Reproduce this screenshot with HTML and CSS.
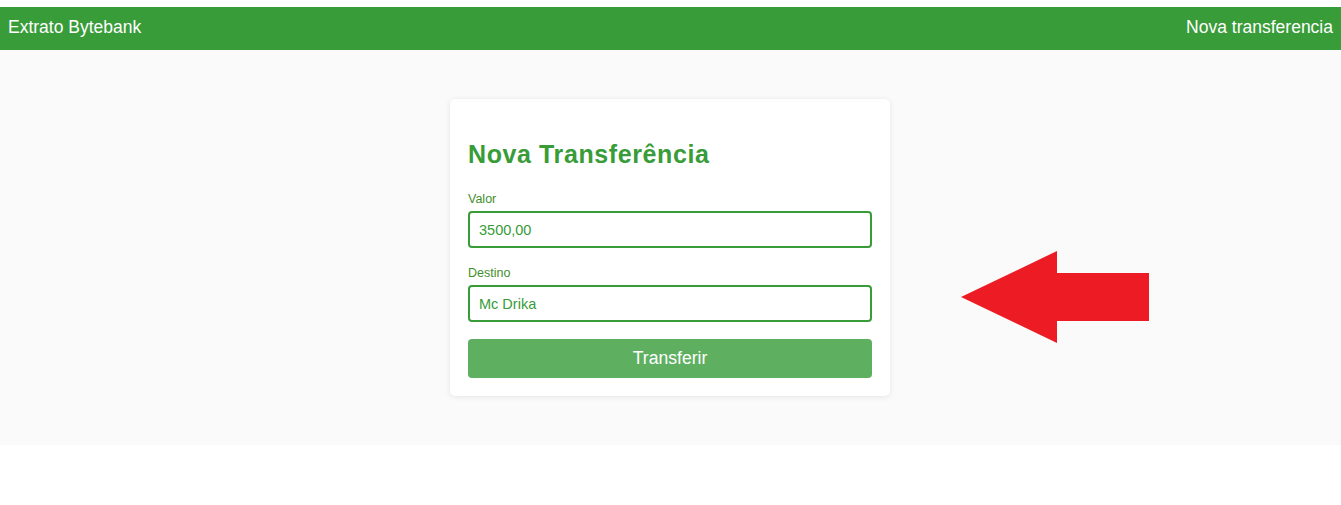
FILE: index.html
```html
<!DOCTYPE html>
<html lang="pt-BR">
<head>
<meta charset="utf-8">
<title>Bytebank</title>
<link rel="stylesheet" href="styles.css">
</head>
<body>
<header class="topbar">
  <a class="topbar-link" href="#">Extrato Bytebank</a>
  <a class="topbar-link" href="#">Nova transferencia</a>
</header>
<main class="stage">
  <section class="card">
    <h2 class="card-title">Nova Transferência</h2>
    <form class="form">
      <div class="field">
        <label class="field-label">Valor</label>
        <input class="field-input" type="text" value="3500,00">
      </div>
      <div class="field">
        <label class="field-label">Destino</label>
        <input class="field-input" type="text" value="Mc Drika">
      </div>
      <button class="btn" type="button">Transferir</button>
    </form>
  </section>
  <svg class="arrow" width="190" height="94" viewBox="960 250 190 94" aria-hidden="true">
    <polygon points="961,297 1057,251 1057,273 1149,273 1149,321 1057,321 1057,343" fill="#ed1c24"/>
  </svg>
</main>
</body>
</html>
```
FILE: styles.css
```css
* { box-sizing: border-box; }
html, body { margin: 0; padding: 0; background: #ffffff; }
body {
  padding-top: 7px;
  font-family: "Liberation Sans", Arial, sans-serif;
  height: 505px;
  overflow: hidden;
}
.topbar {
  display: flex;
  justify-content: space-between;
  align-items: center;
  background: #389c38;
  height: 43px;
  padding: 0 8px 2px 8px;
}
.topbar-link {
  color: #ffffff;
  text-decoration: none;
  font-size: 17.5px;
  line-height: 21px;
}
.stage {
  position: relative;
  background: #fafafa;
  padding: 49px 1px 49px 0;
  display: flex;
  justify-content: center;
}
.card {
  width: 440px;
  background: #ffffff;
  border-radius: 5px;
  box-shadow: 0 1px 6px rgba(0, 0, 0, 0.08), 0 0 2px rgba(0, 0, 0, 0.04);
  padding: 18px;
}
.card-title {
  margin: 23px 0 24px;
  font-size: 25px;
  line-height: 28px;
  font-weight: bold;
  letter-spacing: 0.6px;
  color: #389c38;
}
.form {
  display: flex;
  flex-direction: column;
  gap: 17px;
}
.field {
  display: flex;
  flex-direction: column;
  gap: 4px;
}
.field + .field { margin-top: 1px; }
.field-label {
  font-size: 12.5px;
  line-height: 15px;
  color: #3f8f2c;
}
.field-input {
  height: 37px;
  width: 100%;
  border: 2px solid #389c38;
  border-radius: 4px;
  padding: 0 9px;
  font-family: "Liberation Sans", Arial, sans-serif;
  font-size: 14.5px;
  color: #389c38;
  background: #ffffff;
  outline: none;
}
.btn {
  height: 39px;
  width: 100%;
  border: none;
  border-radius: 4px;
  background: #5eb060;
  color: #ffffff;
  font-family: "Liberation Sans", Arial, sans-serif;
  font-size: 17.6px;
  cursor: pointer;
}
.arrow {
  position: absolute;
  left: 960px;
  top: 200px;
}
```
